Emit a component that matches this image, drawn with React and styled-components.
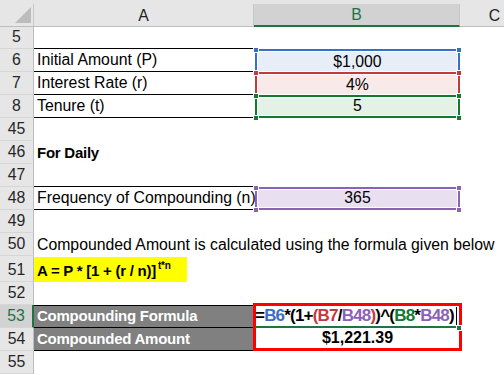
import React from "react";
import styled, { createGlobalStyle } from "styled-components";

const GlobalStyle = createGlobalStyle`
  body {
    margin: 0;
    background: #fff;
  }
  * {
    box-sizing: border-box;
  }
`;

const tones = {
  blue: { line: "#3a6ec6", fill: "#e8eef8", text: "#3a6ec6" },
  red: { line: "#c4393e", fill: "#f9e9e9", text: "#c4393e" },
  green: { line: "#12792f", fill: "#e4f1e6", text: "#12792f" },
  purple: { line: "#8c62b8", fill: "#e8e0f1", text: "#8c62b8" },
  plain: { text: "#000" },
};

const Sheet = styled.div`
  width: 504px;
  height: 375px;
  overflow: hidden;
  background: #fff;
  font-family: "Liberation Sans", Arial, sans-serif;
  font-size: 15.8px;
  color: #000;
`;

const HeaderBar = styled.div`
  display: grid;
  grid-template-columns: 34px 220px 206px 70px;
  height: 27px;
  padding-top: 4px;
  background: #e6e6e6;
  border-bottom: 1px solid #bdbdbd;
`;

const ColHead = styled.div`
  display: flex;
  align-items: center;
  justify-content: center;
  line-height: 18px;
  padding-top: 1px;
  border-right: 1px solid #c8c8c8;
  background: ${(p) => (p.$active ? "#d2d2d2" : "#e6e6e6")};
  color: ${(p) => (p.$active ? "#217346" : "#222")};
  border-bottom: ${(p) => (p.$active ? "2px solid #217346" : "0")};
  margin-bottom: ${(p) => (p.$active ? "-1px" : "0")};
`;

const Corner = styled(ColHead)`
  align-items: flex-end;
  justify-content: flex-end;
  padding: 0 2px 3px 0;
`;

const Body = styled.div`
  display: grid;
  grid-template-columns: 34px 220px 206px;
  grid-template-rows: ${(p) => p.$rows};
`;

const RowNum = styled.div`
  grid-column: 1;
  display: flex;
  align-items: flex-end;
  justify-content: center;
  padding-bottom: 2px;
  line-height: 18px;
  background: ${(p) => (p.$active ? "#d2d2d2" : "#e6e6e6")};
  color: ${(p) => (p.$active ? "#217346" : "#262626")};
  border-right: ${(p) => (p.$active ? "2px solid #217346" : "1px solid #bdbdbd")};
  border-bottom: 1px solid #d6d6d6;
`;

const ACell = styled.div`
  grid-column: 2;
  display: flex;
  align-items: flex-end;
  padding: ${(p) => (p.$flush ? "0" : "0 0 2px 3px")};
  line-height: 18px;
  white-space: nowrap;
  border-top: ${(p) => (p.$top ? "1px solid #000" : "0")};
  border-bottom: ${(p) => (p.$bottom ? "1px solid #000" : "0")};
  background: ${(p) => p.$fill || "transparent"};
  color: ${(p) => (p.$fill ? "#fff" : "#000")};
`;

const Bold = styled.span`
  font-weight: 700;
  font-size: 15px;
  letter-spacing: -0.25px;
`;

const Marker = styled.span`
  display: inline-block;
  width: 153px;
  height: 25px;
  padding: 5px 0 0 3px;
  background: #ffff00;
  font-weight: 700;
  font-size: 15px;
  letter-spacing: -0.25px;
  line-height: 18px;
`;

const Sup = styled.sup`
  font-size: 10px;
  line-height: 0;
  vertical-align: 7px;
  margin-left: 2px;
`;

const BCell = styled.div`
  grid-column: 3;
  display: flex;
  padding-left: 1px;
`;

const Range = styled.div`
  flex: 1;
  position: relative;
  display: flex;
  align-items: flex-end;
  justify-content: center;
  padding-bottom: 1px;
  line-height: 18px;
  border: 2px solid ${(p) => tones[p.$tone].line};
  border-bottom-width: ${(p) => (p.$open ? 0 : 2)}px;
  background: ${(p) => tones[p.$tone].fill};
  box-shadow: inset 0 0 0 1px #fff;
`;

const Handle = styled.span`
  position: absolute;
  width: 6px;
  height: 6px;
  background: ${(p) => p.$color};
  border: 1px solid #fff;
  ${(p) => (p.$y === "top" ? "top: -4px;" : "bottom: -5px;")}
  ${(p) => (p.$x === "left" ? "left: -4px;" : "right: -4px;")}
  z-index: 2;
`;

const FormulaBox = styled.div`
  grid-column: 3;
  grid-row: span 2;
  margin: -2px -2px 0 -1px;
  border: 3px solid #ff0000;
  display: grid;
  grid-template-rows: 1fr 1fr;
  position: relative;
  z-index: 1;
  background: #fff;
`;

const EditRow = styled.div`
  position: relative;
  display: flex;
  align-items: center;
  margin: 0 1px 0 -1px;
  border-bottom: 2px solid #217346;
  font-weight: 700;
  font-size: 17px;
  letter-spacing: -0.8px;
  white-space: nowrap;
`;

const Caret = styled.span`
  display: inline-block;
  width: 1px;
  height: 19px;
  margin-left: 2px;
  background: #000;
`;

const Token = styled.span`
  color: ${(p) => tones[p.$tone || "plain"].text};
`;

const ValueRow = styled.div`
  display: flex;
  align-items: center;
  justify-content: center;
  font-weight: 700;
  font-size: 16px;
`;

function RangeCell({ tone, open, children }) {
  const c = tones[tone].line;
  return (
    <BCell>
      <Range $tone={tone} $open={open}>
        <Handle $color={c} $x="left" $y="top" />
        <Handle $color={c} $x="right" $y="top" />
        {!open && <Handle $color={c} $x="left" $y="bottom" />}
        {!open && <Handle $color={c} $x="right" $y="bottom" />}
        {children}
      </Range>
    </BCell>
  );
}

const formula = [
  ["="],
  ["B6", "blue"],
  ["*(1+"],
  ["(B7", "red"],
  ["/"],
  ["B48", "purple"],
  [")", "red"],
  [")^("],
  ["B8", "green"],
  ["*"],
  ["B48", "purple"],
  [")"],
];

const heights = [22, 23, 23, 23, 23, 23, 23, 23, 23, 23, 26, 23, 23, 23, 23];

export default function App() {
  return (
    <Sheet>
      <GlobalStyle />
      <HeaderBar>
        <Corner>
          <svg width="16" height="16" viewBox="0 0 16 16">
            <polygon points="16,0 16,16 0,16" fill="#bcbcbc" />
          </svg>
        </Corner>
        <ColHead>A</ColHead>
        <ColHead $active>B</ColHead>
        <ColHead>C</ColHead>
      </HeaderBar>

      <Body $rows={heights.map((h) => h + "px").join(" ")}>
        <RowNum>5</RowNum>
        <ACell $bottom />
        <BCell />

        <RowNum>6</RowNum>
        <ACell $bottom>Initial Amount (P)</ACell>
        <RangeCell tone="blue" open>$1,000</RangeCell>

        <RowNum>7</RowNum>
        <ACell $bottom>Interest Rate (r)</ACell>
        <RangeCell tone="red" open>4%</RangeCell>

        <RowNum>8</RowNum>
        <ACell $bottom>Tenure (t)</ACell>
        <RangeCell tone="green">5</RangeCell>

        <RowNum>45</RowNum>
        <ACell />
        <BCell />

        <RowNum>46</RowNum>
        <ACell>
          <Bold>For Daily</Bold>
        </ACell>
        <BCell />

        <RowNum>47</RowNum>
        <ACell $bottom />
        <BCell />

        <RowNum>48</RowNum>
        <ACell $bottom>Frequency of Compounding (n)</ACell>
        <RangeCell tone="purple">365</RangeCell>

        <RowNum>49</RowNum>
        <ACell />
        <BCell />

        <RowNum>50</RowNum>
        <ACell>Compounded Amount is calculated using the formula given below</ACell>
        <BCell />

        <RowNum>51</RowNum>
        <ACell $flush>
          <Marker>
            A = P * [1 + (r / n)]<Sup>t*n</Sup>
          </Marker>
        </ACell>
        <BCell />

        <RowNum>52</RowNum>
        <ACell />
        <BCell />

        <RowNum $active>53</RowNum>
        <ACell $top $bottom $fill="#808080">
          <Bold>Compounding Formula</Bold>
        </ACell>
        <FormulaBox>
          <EditRow>
            {formula.map(([t, tone], i) => (
              <Token key={i} $tone={tone}>
                {t}
              </Token>
            ))}
            <Caret />
            <Handle $color="#217346" $x="right" $y="bottom" />
          </EditRow>
          <ValueRow>$1,221.39</ValueRow>
        </FormulaBox>

        <RowNum>54</RowNum>
        <ACell $bottom $fill="#808080">
          <Bold>Compounded Amount</Bold>
        </ACell>

        <RowNum>55</RowNum>
        <ACell />
        <BCell />
      </Body>
    </Sheet>
  );
}
